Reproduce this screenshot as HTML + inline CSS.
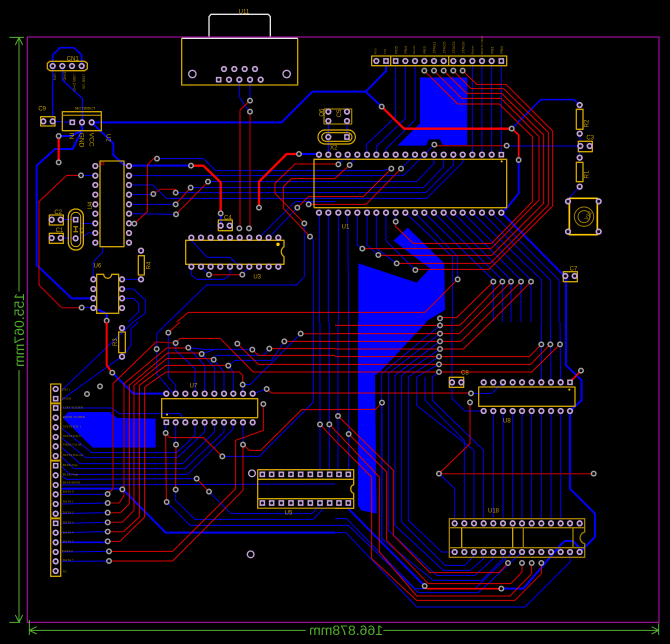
<!DOCTYPE html>
<html><head><meta charset="utf-8"><title>PCB</title>
<style>
html,body{margin:0;padding:0;background:#000;width:670px;height:644px;overflow:hidden}
svg{display:block}
path{fill:none;stroke-linejoin:round}
.b{stroke:#0000f0;stroke-width:3}
.B{stroke:#0000ff;stroke-width:6}
.r{stroke:#e00000;stroke-width:3}
.R{stroke:#ff0000;stroke-width:7}
.d{stroke:#960000;stroke-width:4}
.g{stroke:#d0a400;stroke-width:4}
.G{stroke:#a07c00;stroke-width:4}
.f{fill:#0000ff;stroke:none}
text{font-family:"Liberation Sans",sans-serif;fill:#c49c00}
.s{font-family:"Liberation Serif",serif;font-size:10px;fill:#a08000}
.h{font-size:12px;fill:#a08000}
.l{font-size:18px}
.v{stroke:#a0a0a0;stroke-width:18;stroke-linecap:round}
.p{stroke:#c4a4d8;stroke-width:19;stroke-linecap:round}
.q{stroke:#c4a4d8;stroke-width:17;stroke-linecap:square}
.k{stroke:#0c0410;stroke-width:9;stroke-linecap:round}
.gr{stroke:#55b030;stroke-width:3;fill:none}
.dim{font-size:14px;fill:#4fae2a}
</style></head><body>
<svg xmlns="http://www.w3.org/2000/svg" width="670" height="644" viewBox="0 0 2010 1932">
<rect width="2010" height="1932" fill="#000"/>

<!-- Q1 -->
<g>
<path class="b" d="M718 239V290L735 318 750 335M750 239V302M158 364L217 367M387 527H1005M387 555H458L500 595H1005M387 584H460M527 578H1005M387 613H527M572 563H1005M387 641L528 643M624 545H1005M387 670H403M471 476H610L647 512H1005M243 526H286M245 923H280M182 659H227M182 714H227M240 670H286M240 715L265 699H286M308 740V757L280 785V838M366 838H423M366 867H400L436 900V940L400 966M366 895H400L416 910V935L385 966M574 721L622 772H690L719 800M574 800V825L590 838H672L690 825V800M603 800L627 824M727 824L748 800M777 713L885 605H1005M806 713L892 623M926 613L940 605M913 670V830L890 855H620L505 966M930 710L940 720V966M958 640V966M985 640V966"/>
<path class="B" d="M275 367H845L937 275H1005M275 367L340 430V465L372 495H387M387 497H573M246 367V390L215 408H176M246 390L218 447H165L110 497V795L215 895H280M280 924L320 940V962M662 640V677M897 462H957"/>
<path class="b" style="stroke-width:4" d="M158 198V350M187 198V240L247 295V365M985 363V464"/>
<path class="B" style="stroke-width:5" d="M158 198V165L180 143H222L245 165V198"/>
<path class="R" d="M176 408V487M573 497H610L662 547V640M777 623V545L860 462H897"/>
<path class="r" d="M720 330L750 302M720 330V685M403 671L442 635V495L460 476H471M527 613L572 563M528 643L624 545M243 526H200L117 605V855L185 923M892 623L925 590H1005M913 670L825 580V550L885 492H1005M930 710L850 625V560L875 536H1005M926 613H1005M530 966L565 937H1005"/>
<path class="d" d="M750 335V685M460 582L480 568H527V578M627 824H727M185 923H245"/>
<path class="g" d="M545 115V195M893 115V195"/>
<path d="M627 112V50L633 43H805L811 50V112M545 115H893" style="stroke:#e8e8e8;stroke-width:4"/>
<path class="g" d="M545 195V255H893V195M122 350H165V378H122ZM187 335H304V392H187ZM300 483H372V740H300ZM655 660H697V692H655ZM148 645H190V675H148ZM148 700H190V730H148ZM415 767H433V825H415ZM290 823H311A12 12 0 0 0 335 823H356V940H290ZM557 721V793H852V770A18 18 0 0 1 852 740V721ZM150 184H254L262 190V206L254 212H150L142 206V190Z"/>
<path class="G" d="M187 346H304M972 327H1005M972 372H1005M972 327V372"/>
<rect x="205" y="627" width="45" height="123" rx="22" fill="none" stroke="#e0b000" stroke-width="4"/>
<rect x="213" y="637" width="29" height="103" rx="14" fill="none" stroke="#e0b000" stroke-width="3"/>
<path class="G" d="M220 680H234M220 695H234M227 680V695"/>
<path d="M1005 390H975A21 21 0 0 0 975 432H1005M1005 398H978A13 13 0 0 0 978 424H1005" style="stroke:#e0b000;stroke-width:3.5"/>
<path class="g" d="M942 623V478H1005M942 623H1005"/>
<circle cx="834" cy="733" r="5" fill="#ffd000"/><circle cx="308" cy="491" r="4" fill="none" stroke="#e00000" stroke-width="2"/>
<text class="l" x="716" y="41">U11</text><text class="l" x="200" y="181">CN1</text><text class="l" x="115" y="332">C9</text>
<text x="225" y="328" style="font-size:12px">MC7805CT</text>
<text class="l" x="163" y="642">C2</text><text class="l" x="167" y="696">C1</text><text class="l" x="672" y="658">C4</text><text class="l" x="281" y="802">U6</text><text class="l" x="760" y="835">U3</text>
<text class="l" transform="translate(320,402) rotate(90)">U2</text>
<text class="l" transform="translate(276,628) rotate(-90)">U4</text>
<text class="l" transform="translate(252,703) rotate(-90)">X1</text>
<text class="l" transform="translate(451,808) rotate(-90)">R4</text>
<text transform="translate(208,398) rotate(90)" style="font-size:20px">IN</text>
<text transform="translate(238,398) rotate(90)" style="font-size:20px">GND</text>
<text transform="translate(268,398) rotate(90)" style="font-size:20px">VCC</text>
<g class="h"><text class="h" transform="translate(161,220) rotate(90)">VIN</text><text class="h" transform="translate(190,215) rotate(90)">GND</text><text class="h" transform="translate(219,222) rotate(90)">U5B D+D</text><text class="h" transform="translate(248,222) rotate(90)">USB Vin</text></g>
<text class="l" transform="translate(970,350) rotate(-90)">Q6</text>
<text class="l" x="990" y="449">X2</text>
<path class="p" d="M158 198h0M187 198h0M216 198h0M245 198h0M130 364h0M158 364h0M246 367h0M275 367h0M286 498h0M286 527h0M286 555h0M286 584h0M286 613h0M286 641h0M286 670h0M286 699h0M286 728h0M387 498h0M387 527h0M387 555h0M387 584h0M387 613h0M387 641h0M387 670h0M387 699h0M387 728h0M155 659h0M182 659h0M155 714h0M182 714h0M227 715h0M662 677h0M689 677h0M423 752h0M423 838h0M280 838h0M280 867h0M280 895h0M280 924h0M366 838h0M366 867h0M366 895h0M366 924h0M574 713h0M603 713h0M632 713h0M661 713h0M690 713h0M719 713h0M748 713h0M777 713h0M806 713h0M835 713h0M574 800h0M603 800h0M632 800h0M661 800h0M690 800h0M719 800h0M748 800h0M777 800h0M806 800h0M835 800h0M672 207h0M703 207h0M734 207h0M765 207h0M687 239h0M718 239h0M750 239h0M782 239h0M985 335h0M985 363h0M985 411h0M957 464h0M985 464h0M957 638h0M985 638h0"/>
<path class="q" d="M217 367h0M656 239h0M227 659h0"/>
<path class="k" d="M158 198h0M187 198h0M216 198h0M245 198h0M130 364h0M158 364h0M246 367h0M275 367h0M286 498h0M286 527h0M286 555h0M286 584h0M286 613h0M286 641h0M286 670h0M286 699h0M286 728h0M387 498h0M387 527h0M387 555h0M387 584h0M387 613h0M387 641h0M387 670h0M387 699h0M387 728h0M155 659h0M182 659h0M155 714h0M182 714h0M227 715h0M662 677h0M689 677h0M423 752h0M423 838h0M280 838h0M280 867h0M280 895h0M280 924h0M366 838h0M366 867h0M366 895h0M366 924h0M574 713h0M603 713h0M632 713h0M661 713h0M690 713h0M719 713h0M748 713h0M777 713h0M806 713h0M835 713h0M574 800h0M603 800h0M632 800h0M661 800h0M690 800h0M719 800h0M748 800h0M777 800h0M806 800h0M835 800h0M672 207h0M703 207h0M734 207h0M765 207h0M687 239h0M718 239h0M750 239h0M782 239h0M985 335h0M985 363h0M985 411h0M217 367h0M656 239h0M227 659h0M957 464h0M985 464h0M957 638h0M985 638h0"/>
<circle cx="577" cy="222" r="11" fill="#000" stroke="#c4a4d8" stroke-width="4"/><circle cx="860" cy="222" r="11" fill="#000" stroke="#c4a4d8" stroke-width="4"/>
<path class="v" d="M750 302h0M750 335h0M176 408h0M176 487h0M471 476h0M573 497h0M624 545h0M572 563h0M527 578h0M460 582h0M527 613h0M528 643h0M403 671h0M243 526h0M245 923h0M662 640h0M718 685h0M747 685h0M777 623h0M892 623h0M926 613h0M913 670h0M930 710h0M897 462h0M627 824h0M727 824h0M320 962h0"/>
<path class="k" d="M750 302h0M750 335h0M176 408h0M176 487h0M471 476h0M573 497h0M624 545h0M572 563h0M527 578h0M460 582h0M527 613h0M528 643h0M403 671h0M243 526h0M245 923h0M662 640h0M718 685h0M747 685h0M777 623h0M892 623h0M926 613h0M913 670h0M930 710h0M897 462h0M627 824h0M727 824h0M320 962h0"/>
</g>

<!-- Q2 -->
<g transform="translate(1005,0)">
<path class="f" d="M255 232H397V437H323L315 418H282L273 437H187L255 370ZM70 790L245 848 285 805 175 722 218 683 328 790 330 930 270 966H70Z"/>
<path class="b" d="M182 197V350L93 435 96 464M211 197V355L124 440V464M240 197V360L153 447V464M412 197V464M441 197V464M470 197V464M499 197V464M36 363V411M515 438H736M298 434L268 464M734 401L736 437M734 438V473M734 560L699 597M182 638V665M67 638V735L82 746M96 638V735L130 765M124 638V745L185 790M153 638V722L241 810M211 638L352 770V966M240 638L368 770V838M268 638L475 840V966M297 638L502 840V966M326 638L528 840V966M355 638L558 840V966M383 638L588 840V966M412 638L620 840V966M441 638L646 840V966M470 638L672 840V966M0 512H142L169 506M198 506L240 464M0 527H205L268 464M0 545H245L297 490V464M0 563H265L326 500V464M0 578H272L355 495V464M0 595H275L383 487V464M10 493L38 464M44 495L67 464M10 638V966M38 638L41 966"/>
<path class="B" d="M153 197V213L92 275H0M92 275L140 320M551 480V580L515 625 500 638 680 820 693 830V966"/>
<path class="B" style="stroke-width:4.5" d="M530 386L617 299H717L734 315"/>
<path class="R" d="M140 320L207 386H530"/>
<path class="R" style="stroke-width:5" d="M530 386L551 405V480"/>
<path class="r" d="M383 212L425 253H513L653 393V618L462 808H241M355 212L408 266H506L640 397V615L466 790H185M326 212L395 280H500L626 405V610L470 766H130M297 212L380 295H498L612 410V600L468 746H82M268 212L368 312H493L592 410V605L470 730H235L182 680V665M368 838L270 937H0M0 590H85L169 506M0 613H93L198 506M0 535L44 495M475 845L365 953H315M502 845L385 966M528 845L408 966M558 845L436 966M588 845L468 966"/>
<path class="d" d="M298 434L305 437H515"/>
<path class="g" d="M110 168H515V197H110ZM167 168V197M341 168V197M0 478H515V623H0M724 328H744V388H724ZM724 487H744V545H724ZM730 424H772V455H730ZM685 815H727V845H685Z"/>
<path d="M703 595H787V704H703Z" style="stroke:#ffc800;stroke-width:5"/>
<circle cx="747" cy="650" r="29" fill="none" stroke="#a07c00" stroke-width="3"/><circle cx="747" cy="650" r="18" fill="none" stroke="#a07c00" stroke-width="3"/>
<path d="M0 390H40A21 21 0 0 1 40 432H0M0 398H38A13 13 0 0 1 38 424H0" style="stroke:#e0b000;stroke-width:3.5"/>
<path class="G" d="M0 327H50V372H0"/>
<circle cx="500" cy="484" r="3" fill="#ffd000"/>
<text class="l" x="20" y="686">U1</text><text class="l" x="754" y="418">C3</text><text class="l" x="704" y="811">C7</text>
<text class="l" transform="translate(761,382) rotate(-90)">R2</text><text class="l" transform="translate(761,535) rotate(-90)">R1</text>
<text class="l" transform="translate(18,352) rotate(-90)">C5</text>
<text class="l" transform="translate(757,662) rotate(-60)" style="font-size:16px">V12</text>
<g>
<text class="h" style="font-size:9px" transform="translate(124,163) rotate(-90)">RX0</text>
<text class="h" style="font-size:9px" transform="translate(153,163) rotate(-90)">TX0</text>
<text class="h" transform="translate(187,161) rotate(-90)">PD5</text>
<text class="h" transform="translate(216,161) rotate(-90)">PB4</text>
<text class="h" style="font-size:9px" transform="translate(240,163) rotate(-90)">Sound</text>
<text class="h" transform="translate(273,161) rotate(-90)">PE2</text>
<text class="h" transform="translate(302,161) rotate(-90)">JTAG1</text>
<text class="h" transform="translate(331,161) rotate(-90)">JTAG5</text>
<text class="h" transform="translate(360,161) rotate(-90)">JTAG3</text>
<text class="h" transform="translate(388,161) rotate(-90)">JTAG9</text>
<text class="h" style="font-size:9px" transform="translate(415,163) rotate(-90)">Button</text>
<text class="h" style="font-size:9px" transform="translate(444,163) rotate(-90)">BOOT1 HIGH</text>
<text class="h" transform="translate(475,161) rotate(-90)">PB1</text>
<text class="h" transform="translate(504,161) rotate(-90)">PB0</text>
</g>
<path class="p" d="M124 183h0M211 183h0M240 183h0M268 183h0M297 183h0M326 183h0M355 183h0M383 183h0M412 183h0M441 183h0M470 183h0M734 315h0M734 401h0M734 473h0M734 560h0M736 438h0M764 438h0M699 604h0M791 604h0M699 695h0M791 695h0M691 828h0M719 828h0M36 335h0M36 363h0M10 464h0M38 464h0M67 464h0M96 464h0M124 464h0M153 464h0M182 464h0M211 464h0M240 464h0M268 464h0M297 464h0M326 464h0M355 464h0M383 464h0M412 464h0M441 464h0M470 464h0M10 638h0M38 638h0M67 638h0M96 638h0M124 638h0M153 638h0M182 638h0M211 638h0M240 638h0M268 638h0M297 638h0M326 638h0M355 638h0M383 638h0M412 638h0M441 638h0M470 638h0M499 638h0"/>
<path class="q" d="M153 183h0M182 183h0M499 183h0M36 411h0M499 464h0"/>
<path class="k" d="M124 183h0M211 183h0M240 183h0M268 183h0M297 183h0M326 183h0M355 183h0M383 183h0M412 183h0M441 183h0M470 183h0M734 315h0M734 401h0M734 473h0M734 560h0M736 438h0M764 438h0M699 604h0M791 604h0M699 695h0M791 695h0M691 828h0M719 828h0M36 335h0M36 363h0M10 464h0M38 464h0M153 183h0M182 183h0M499 183h0M36 411h0M67 464h0M96 464h0M124 464h0M153 464h0M182 464h0M211 464h0M240 464h0M268 464h0M297 464h0M326 464h0M355 464h0M383 464h0M412 464h0M441 464h0M470 464h0M499 464h0M10 638h0M38 638h0M67 638h0M96 638h0M124 638h0M153 638h0M182 638h0M211 638h0M240 638h0M268 638h0M297 638h0M326 638h0M355 638h0M383 638h0M412 638h0M441 638h0M470 638h0M499 638h0"/>
<path class="v" d="M268 212h0M297 212h0M326 212h0M355 212h0M383 212h0M140 320h0M530 386h0M551 480h0M515 437h0M298 434h0M10 493h0M44 495h0M169 506h0M198 506h0M182 665h0M82 746h0M130 765h0M185 790h0M241 810h0M368 838h0M475 845h0M502 845h0M528 845h0M558 845h0M588 845h0M315 955h0"/>
<path class="k" d="M268 212h0M297 212h0M326 212h0M355 212h0M383 212h0M140 320h0M530 386h0M551 480h0M515 437h0M298 434h0M10 493h0M44 495h0M169 506h0M198 506h0M182 665h0M82 746h0M130 765h0M185 790h0M241 810h0M368 838h0M475 845h0M502 845h0M528 845h0M558 845h0M588 845h0M315 955h0"/>
</g>

<!-- Q3 -->
<g transform="translate(0,966)">
<path class="f" d="M190 285L205 270H330L352 288 467 290V377H278L190 290Z"/>
<path class="b" d="M185 205L400 0M185 233L370 100M415 0L393 20V70L370 100M182 258H335L358 275H540L557 300M182 316L275 392H530L585 340V301M182 345L257 407H532L614 330V301M182 373L240 425H548L643 330V301M182 402L222 440H555L672 330V301M182 431L210 457H563L700 320V301M182 460L200 472 590 470M627 509L693 575H935L960 550M182 489L1005 486M182 517H323M182 546L323 543M182 575L323 572M182 604L323 601M182 632L323 629M182 690L327 688M182 718L327 717M505 0L470 35V155L499 190 520 215M505 32V165L527 190V215M527 63V85L585 140V215M565 77L614 130V215M605 96L643 135V215M641 113L672 150V215M685 131L700 150V215M728 188V215M565 77L615 82H712M605 96L645 82H757M641 113L650 100H790L808 80M685 131L705 115H815L853 58M728 188H750L902 35M758 215L800 201M497 301V333M667 403H778L940 240V0M527 301V368M527 503V535L585 592H940L970 560M500 540L570 610H1005M729 301V368M960 0V307M988 0V307M960 307V443M988 307V443"/>
<path class="B" d="M337 152L400 215H499M182 500H367L497 632H1005"/>
<path class="B" style="stroke-width:5" d="M182 661H323"/>
<path class="R" style="stroke-width:6" d="M320 0V130L337 152"/>
<path class="r" d="M323 516L339 500V185L468 60M358 543L372 520V185L500 78H565M362 572L388 545V190L503 93H605M367 601L402 565V190L500 110H641M370 629L418 585V190L498 130H685M360 658L434 585V195L498 150H718L728 160V188M323 658H360M518 688L707 500V355L790 325V246M327 688H518M518 717L729 505V368M327 717H518M729 368L748 385H782L905 263H1005M497 333L510 347H610L667 403M497 333L499 540M528 368L527 503M590 470L627 509M505 32L540 0M540 49H660L760 150H1005M527 63L540 49M712 65L775 127H1005M757 83L775 100H1005M808 80H1005M853 58H1005M815 213H1005M800 201L815 213M988 307L1005 325M960 307L1005 355"/>
<path class="d" d="M468 60L527 63M323 543H358M323 572H362M323 601H367M323 629H370M339 200V500M372 190V520M902 35H1005"/>
<path class="g" d="M152 186H182V243H152ZM152 245H182V415H152ZM152 417H182V588H152ZM152 590H182V763H152ZM356 30H376V92H356ZM485 230H773V287H485ZM773 443H1005M773 443V472H1005M773 530H1005M773 530V559H1005M773 472V530"/>
<path class="G" d="M773 559H1005"/>
<circle cx="501" cy="278" r="3" fill="#ffd000"/>
<text class="l" x="569" y="197">U7</text><text class="l" x="854" y="577">U5</text>
<text class="l" transform="translate(351,72) rotate(-90)">R3</text>
<g>
<text class="s" x="186" y="205">EN5 1</text><text class="s" x="186" y="233">GOUR</text><text class="s" x="188" y="259">LEFT SLIDER</text><text class="s" x="188" y="288">RIGHT SLIDER</text><text class="s" x="188" y="317">JOYSTICK 1</text><text class="s" x="188" y="345">JOYSTICK C</text><text class="s" x="188" y="371">SIROCCO nd</text><text class="s" x="188" y="402">JOYSTICK nd</text><text class="s" x="188" y="432">BLED Day</text><text class="s" x="188" y="460">BLED Vein</text><text class="s" x="188" y="484">BLED BIND</text><text class="s" x="188" y="512">DATA 0</text><text class="s" x="188" y="541">DATA 1</text><text class="s" x="188" y="574">DATA 2</text><text class="s" x="188" y="605">DATA 3</text><text class="s" x="188" y="634">DATA 4</text><text class="s" x="188" y="662">DATA 5</text><text class="s" x="186" y="690">DATA 6</text><text class="s" x="188" y="717">DATA 7</text><text class="s" x="188" y="752">NC</text>
</g>
<path class="p" d="M167 201h0M167 287h0M167 316h0M167 345h0M167 373h0M167 402h0M167 460h0M167 489h0M167 517h0M167 546h0M167 575h0M167 632h0M167 661h0M167 690h0M167 718h0M167 747h0M366 18h0M366 104h0M527 215h0M556 215h0M585 215h0M614 215h0M643 215h0M672 215h0M700 215h0M729 215h0M758 215h0M499 215h0M527 301h0M556 301h0M585 301h0M614 301h0M643 301h0M672 301h0M700 301h0M729 301h0M758 301h0"/>
<path class="q" d="M167 230h0M167 258h0M167 431h0M167 604h0M499 301h0M787 457h0M815 457h0M844 457h0M873 457h0M902 457h0M931 457h0M960 457h0M989 457h0M787 543h0M815 543h0M844 543h0M873 543h0M902 543h0M931 543h0M960 543h0M989 543h0"/>
<path class="k" d="M167 201h0M167 287h0M167 316h0M167 345h0M167 373h0M167 402h0M167 460h0M167 489h0M167 517h0M167 546h0M167 575h0M167 632h0M167 661h0M167 690h0M167 718h0M167 747h0M366 18h0M366 104h0M527 215h0M556 215h0M585 215h0M614 215h0M643 215h0M672 215h0M700 215h0M729 215h0M758 215h0M499 215h0M527 301h0M556 301h0M585 301h0M614 301h0M643 301h0M672 301h0M700 301h0M729 301h0M758 301h0M167 230h0M167 258h0M167 431h0M167 604h0M499 301h0M787 457h0M815 457h0M844 457h0M873 457h0M902 457h0M931 457h0M960 457h0M989 457h0M787 543h0M815 543h0M844 543h0M873 543h0M902 543h0M931 543h0M960 543h0M989 543h0"/>
<circle cx="756" cy="454" r="10" fill="#000" stroke="#c4a4d8" stroke-width="4"/><circle cx="752" cy="697" r="10" fill="#000" stroke="#c4a4d8" stroke-width="4"/>
<path class="v" d="M300 193h0M261 216h0M337 152h0M367 502h0M323 516h0M323 543h0M323 572h0M323 601h0M323 629h0M323 658h0M327 688h0M327 717h0M505 32h0M527 63h0M470 81h0M565 77h0M605 96h0M641 113h0M685 131h0M712 65h0M757 83h0M808 80h0M853 58h0M902 35h0M728 188h0M800 201h0M790 246h0M497 333h0M528 368h0M729 368h0M667 403h0M590 470h0M627 509h0M527 503h0M500 540h0M960 307h0M988 307h0"/>
<path class="k" d="M300 193h0M261 216h0M337 152h0M367 502h0M323 516h0M323 543h0M323 572h0M323 601h0M323 629h0M323 658h0M327 688h0M327 717h0M505 32h0M527 63h0M470 81h0M565 77h0M605 96h0M641 113h0M685 131h0M712 65h0M757 83h0M808 80h0M853 58h0M902 35h0M728 188h0M800 201h0M790 246h0M497 333h0M528 368h0M729 368h0M667 403h0M590 470h0M627 509h0M527 503h0M500 540h0M960 307h0M988 307h0"/>
</g>

<!-- Q4 -->
<g transform="translate(1005,966)">
<path class="f" d="M69 0H275L135 150 120 160 125 575 78 565 69 550Z"/>
<path class="b" d="M9 0V282M41 0V336M9 282V445M41 336V445M315 10L140 155V650L295 775H440L504 710V690M315 35L160 155V625L305 760H420L475 710V690M315 58L180 160V610L325 745H405L446 710V690M315 81L200 160V600L330 730H390L417 700V690M312 104L220 165V595L320 690H359M312 127L245 165V250L417 385V590M312 150L292 165V235L446 385V590M270 165V235L388 355V590M141 242V660M619 0V181M646 0L648 181M675 0L677 181M351 0V230L390 267H446M408 214H470L504 181M312 455L359 500V590M475 267V590M504 267V590M533 267V590M561 267V590M590 267V590M619 267V590M648 267V590M677 267V590M0 590H35L240 800H420L533 690M0 610H40L250 812H430L561 690M0 632H33L245 855H570L705 720V690"/>
<path class="B" d="M693 0V130L740 175V235L705 267V500L780 575V645L735 690M499 800H565L680 665 690 657H715L735 680M40 560L269 792"/>
<path class="r" d="M315 10H0M0 10H372L385 0M0 35H372L408 0M0 58H378L436 0M0 81H385L468 0M0 104H583L619 67M0 127H587L646 67M0 150H590L675 67M0 213H408M0 262H122L141 242M405 241V365L312 455M9 282L175 445V640L285 752H492L519 723M41 336L155 450V655L280 785H527L561 750V723M0 325L133 465V690L245 822H525L590 755V723M0 355L110 465V710L245 835H540L619 755V723"/>
<path class="R" style="stroke-width:5" d="M269 792L275 800H499M705 180L738 146"/>
<path class="d" d="M312 455H776"/>
<path class="g" d="M0 443H56V472H0M0 530H56V559H0M56 472V488A14 14 0 0 0 56 514V530M343 166H386V196H343ZM431 195H720V253H431Z"/>
<path class="G" d="M343 590H749V617H343ZM343 677H749V706H343ZM343 617V677M565 617V677M714 617V677M749 617V630A18 18 0 0 0 749 665V677"/>
<path class="g" d="M380 617V677M533 617V677"/>
<circle cx="703" cy="203" r="3" fill="#ffd000"/>
<text class="l" x="378" y="158">C8</text><text class="l" x="504" y="301">U8</text><text class="l" x="459" y="571">U18</text>
<path class="p" d="M351 181h0M379 181h0M446 181h0M475 181h0M504 181h0M533 181h0M561 181h0M590 181h0M619 181h0M648 181h0M677 181h0M446 267h0M475 267h0M504 267h0M533 267h0M561 267h0M590 267h0M619 267h0M648 267h0M677 267h0M705 267h0M359 604h0M388 604h0M417 604h0M446 604h0M475 604h0M504 604h0M533 604h0M561 604h0M590 604h0M619 604h0M648 604h0M677 604h0M705 604h0M734 604h0M359 690h0M388 690h0M417 690h0M446 690h0M475 690h0M504 690h0M533 690h0M561 690h0M590 690h0M619 690h0M648 690h0M677 690h0M705 690h0M734 690h0"/>
<path class="q" d="M705 181h0M12 457h0M40 457h0M12 543h0M40 543h0"/>
<path class="k" d="M351 181h0M379 181h0M446 181h0M475 181h0M504 181h0M533 181h0M561 181h0M590 181h0M619 181h0M648 181h0M677 181h0M446 267h0M475 267h0M504 267h0M533 267h0M561 267h0M590 267h0M619 267h0M648 267h0M677 267h0M705 267h0M359 604h0M388 604h0M417 604h0M446 604h0M475 604h0M504 604h0M533 604h0M561 604h0M590 604h0M619 604h0M648 604h0M677 604h0M705 604h0M734 604h0M359 690h0M388 690h0M417 690h0M446 690h0M475 690h0M504 690h0M533 690h0M561 690h0M590 690h0M619 690h0M648 690h0M677 690h0M705 690h0M734 690h0M705 181h0M12 457h0M40 457h0M12 543h0M40 543h0"/>
<path class="v" d="M315 10h0M315 35h0M315 58h0M315 81h0M312 104h0M312 127h0M312 150h0M619 67h0M646 67h0M675 67h0M738 146h0M408 214h0M405 241h0M141 242h0M9 282h0M41 336h0M312 455h0M776 455h0M519 723h0M561 723h0M590 723h0M619 723h0M269 792h0M499 800h0"/>
<path class="k" d="M315 10h0M315 35h0M315 58h0M315 81h0M312 104h0M312 127h0M312 150h0M619 67h0M646 67h0M675 67h0M738 146h0M408 214h0M405 241h0M141 242h0M9 282h0M41 336h0M312 455h0M776 455h0M519 723h0M561 723h0M590 723h0M619 723h0M269 792h0M499 800h0"/>
</g>

<!-- Board outline and dimensions -->
<rect x="82" y="111" width="1895" height="1756" fill="none" stroke="#a50fa5" stroke-width="3.5"/>
<path class="gr" d="M57 111V875M57 1110V1866M28 112H72M28 1867H60M46 135L57 112 68 135M46 1845L57 1867 68 1845"/>
<path class="gr" d="M88 1860V1905M1976 1870V1905M88 1891H917M1150 1891H1976M110 1880L88 1891 110 1902M1955 1880L1976 1891 1955 1902"/>
<g transform="scale(3)">
<text class="dim" transform="translate(383,635) scale(-1,1)">166.878mm</text>
<text class="dim" transform="translate(24,293) rotate(-90) scale(-1,1)">155.067mm</text>
</g>
</svg>
</body></html>
